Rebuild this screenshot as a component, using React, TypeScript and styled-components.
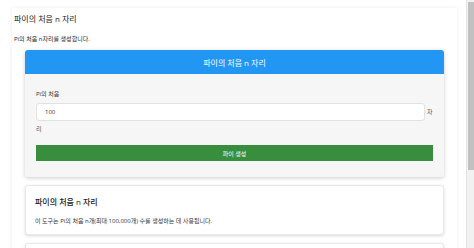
import React from "react";
import styled, { createGlobalStyle } from "styled-components";

const Global = createGlobalStyle`
body {
    margin: 0;
    background: #ffffff;
    font-family: "Open Sans", "Noto Sans CJK KR", sans-serif;
    color: #333333;
}
`

const App = () => {
    return (
        <>
            <Global />
            <Frame>
                <Content>
                    <Page>
                        <Title>파이의 처음 n 자리</Title>
                        <Sub>Pi의 처음 n자리를 생성합니다.</Sub>

                        <FormCard>
                            <Header>파이의 처음 n 자리</Header>
                            <Body>
                                <Label>Pi의 처음</Label>
                                <Field>
                                    <Input defaultValue="100" />자리
                                </Field>
                                <Button>파이 생성</Button>
                            </Body>
                        </FormCard>

                        <InfoCard>
                            <InfoTitle>파이의 처음 n 자리</InfoTitle>
                            <InfoText>이 도구는 Pi의 처음 n개(최대 100,000개) 수를 생성하는 데 사용됩니다.</InfoText>
                        </InfoCard>

                        {/* next card, only its top edge is in view */}
                        <InfoCard $minHeight={60} />
                    </Page>
                </Content>
                <Track>
                    <Thumb />
                </Track>
            </Frame>
        </>
    )
}

export default App;

const Frame = styled.div`
display: flex;
height: 100vh;
overflow: hidden;
`

const Content = styled.div`
flex: 1;
overflow: hidden;
`

const Track = styled.div`
width: 8px;
flex-shrink: 0;
background: #f1f1f1;
border-left: 1px solid #e6e6e6;
box-sizing: border-box;
padding-top: 2px;
`

const Thumb = styled.div`
height: 168px;
background: #c1c1c1;
margin-left: 1px;
`

const Page = styled.div`
width: 445px;
margin: 8px 0 0 12px;
padding-bottom: 90px;
background: #ffffff;
box-shadow: 0 0 4px rgba(0, 0, 0, 0.08);
`

const Title = styled.div`
padding: 5px 0 0 2px;
font-size: 8px;
line-height: 12px;
font-weight: 400;
color: #222;
`

const Sub = styled.div`
margin-top: 10px;
padding-left: 2px;
font-size: 6px;
line-height: 8px;
color: #222;
`

const FormCard = styled.div`
margin: 7px 13px 0;
border-radius: 3px;
background: #f6f6f6;
box-shadow: 0 1px 4px rgba(0, 0, 0, 0.2);
`

const Header = styled.div`
height: 24px;
display: flex;
align-items: center;
justify-content: center;
background: #2196f3;
color: #ffffff;
font-size: 8px;
border-radius: 3px 3px 0 0;
`

const Body = styled.div`
padding: 16px 11px 16px;
`

const Label = styled.div`
font-size: 6px;
line-height: 8px;
color: #333;
margin-bottom: 5px;
`

const Field = styled.div`
width: 398px;
font-size: 6px;
line-height: 16px;
color: #555;
`

const Input = styled.input`
box-sizing: border-box;
width: 389px;
height: 18px;
margin: 0 2px 0 0;
padding: 0 8px;
border: 1px solid #e2e2e2;
border-radius: 3px;
background: #ffffff;
font-family: "Open Sans", "Noto Sans CJK KR", sans-serif;
font-size: 6px;
color: #333;
vertical-align: middle;
outline: none;
`

const Button = styled.div`
margin-top: 8px;
height: 16px;
display: flex;
align-items: center;
justify-content: center;
background: #388e3c;
color: #ffffff;
font-size: 6px;
`

const InfoCard = styled.div<{ $minHeight?: number }>`
margin: 8px 13px 0;
padding: 10px 9px 9px;
min-height: ${p => p.$minHeight ?? 0}px;
background: #ffffff;
border: 1px solid #e8e8e8;
border-radius: 3px;
box-shadow: 0 1px 3px rgba(0, 0, 0, 0.15);
`

const InfoTitle = styled.div`
font-size: 8px;
line-height: 12px;
font-weight: 500;
color: #222;
`

const InfoText = styled.div`
margin-top: 9px;
font-size: 6px;
line-height: 8px;
color: #333;
`
